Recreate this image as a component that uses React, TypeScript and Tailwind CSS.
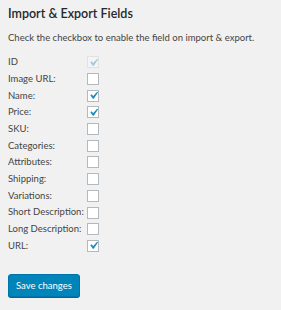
const fields: { label: string; checked: boolean; disabled?: boolean }[] = [
  { label: "ID", checked: true, disabled: true },
  { label: "Image URL:", checked: false },
  { label: "Name:", checked: true },
  { label: "Price:", checked: true },
  { label: "SKU:", checked: false },
  { label: "Categories:", checked: false },
  { label: "Attributes:", checked: false },
  { label: "Shipping:", checked: false },
  { label: "Variations:", checked: false },
  { label: "Short Description:", checked: false },
  { label: "Long Description:", checked: false },
  { label: "URL:", checked: true },
];

function Check({ checked, disabled }: { checked: boolean; disabled?: boolean }) {
  return (
    <span
      className={`flex h-[12px] w-[12px] items-center justify-center overflow-visible border ${
        disabled ? "border-[#e2e2e2] bg-[#f4f4f4]" : "border-[#b4b9be] bg-white"
      }`}
    >
      {checked && (
        <svg viewBox="0 0 20 20" className="h-[15px] w-[15px] shrink-0">
          <path
            d="M14.83 4.89l1.34.94-5.81 8.38H9.02L5.78 9.67l1.34-1.25 2.57 2.4z"
            fill={disabled ? "#a0c8dc" : "#1e8cbe"}
          />
        </svg>
      )}
    </span>
  );
}

export default function App() {
  return (
    <div className="min-h-[310px] w-[281px] bg-[#f1f1f1] px-[8px] pt-[4px] font-['Lato',sans-serif] text-[#444]">
      <h2 className="text-[12.5px] font-semibold leading-[20px] text-[#23282d]">Import &amp; Export Fields</h2>
      <p className="mt-[6px] text-[9.5px] leading-[16px] whitespace-nowrap">Check the checkbox to enable the field on import &amp; export.</p>
      <div className="mt-[8px] flex flex-col">
        {fields.map((f) => (
          <div key={f.label} className="flex h-[16.7px] items-center">
            <span className="w-[79px] text-[9.5px] whitespace-nowrap">{f.label}</span>
            <Check checked={f.checked} disabled={f.disabled} />
          </div>
        ))}
      </div>
      <button className="mt-[20px] h-[23px] rounded-[3px] border border-[#0073aa] bg-[#0085ba] px-[7px] text-[9.5px] text-white shadow-[0_1px_0_#006799]">
        Save changes
      </button>
    </div>
  );
}
